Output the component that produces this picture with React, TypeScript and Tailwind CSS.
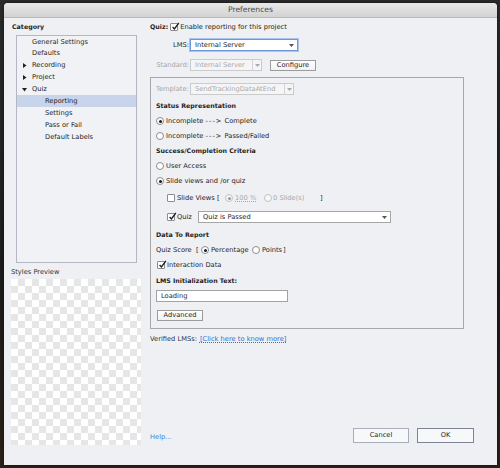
import React from 'react'

function Arrow({ color = '#555' }: { color?: string }) {
    return (
        <svg width="5" height="3" viewBox="0 0 5 3" className="shrink-0">
            <path d="M0 0 L5 0 L2.5 3 Z" fill={color} />
        </svg>
    )
}

function Tri({ open }: { open?: boolean }) {
    return open ? (
        <svg width="5" height="5" viewBox="0 0 5 5">
            <path d="M0 1 L5 1 L2.5 4.5 Z" fill="#222" />
        </svg>
    ) : (
        <svg width="5" height="5" viewBox="0 0 5 5">
            <path d="M1 0 L4.5 2.5 L1 5 Z" fill="#222" />
        </svg>
    )
}

function Check({ checked }: { checked?: boolean }) {
    return (
        <span className="relative block w-[8px] h-[8px] shrink-0 border border-[#8c8c8c] bg-white rounded-[1px]">
            {checked && (
                <svg width="9" height="9" viewBox="0 0 9 9" className="absolute left-[-0.5px] top-[-2px]">
                    <path d="M1.6 5 L3.4 7 L7.8 1" stroke="#1e1e1e" strokeWidth="1.3" fill="none" />
                </svg>
            )}
        </span>
    )
}

function Radio({ on, disabled }: { on?: boolean; disabled?: boolean }) {
    return (
        <span
            className={
                disabled
                    ? 'flex items-center justify-center w-[8px] h-[8px] shrink-0 rounded-full border border-[#c2c2c2] bg-[#f7f7f7]'
                    : 'flex items-center justify-center w-[8px] h-[8px] shrink-0 rounded-full border border-[#8c8c8c] bg-white'
            }
        >
            {on && <span className={disabled ? 'w-[3px] h-[3px] rounded-full bg-[#9a9a9a]' : 'w-[3px] h-[3px] rounded-full bg-[#1e1e1e]'} />}
        </span>
    )
}

const tree = [
    { label: 'General Settings', depth: 0 },
    { label: 'Defaults', depth: 0 },
    { label: 'Recording', depth: 0, tri: 'closed' },
    { label: 'Project', depth: 0, tri: 'closed' },
    { label: 'Quiz', depth: 0, tri: 'open' },
    { label: 'Reporting', depth: 1, selected: true },
    { label: 'Settings', depth: 1 },
    { label: 'Pass or Fail', depth: 1 },
    { label: 'Default Labels', depth: 1 },
]

export default function App() {
    return (
        <div className="w-[500px] h-[468px] overflow-hidden bg-[linear-gradient(180deg,#2a2a2a,#1b1b1b_60%,#2b2116)] pt-[3px] pl-[4px] pr-[3px] font-['DejaVu_Sans',sans-serif] text-[6.7px] leading-none text-[#1f1f1f]">
            <div className="w-[493px] h-[462px] flex flex-col rounded-t-[4px] overflow-hidden bg-[#eff0f4] shadow-[0_0_3px_rgba(0,0,0,0.6)]">
                {/* title bar */}
                <div className="h-[15px] shrink-0 flex items-center justify-center bg-[linear-gradient(180deg,#e9e9e9,#d2d2d2)] border-b border-[#b9b9b9] text-[7.7px] text-[#4a4a4a]">
                    Preferences
                </div>

                <div className="flex-1 flex pl-[7px] pr-[23px]">
                    {/* left column */}
                    <div className="w-[130px] shrink-0 flex flex-col">
                        <div className="h-[10px] mt-[4px] ml-px flex items-center font-bold text-[6.3px]">Category</div>
                        <div className="mt-[3px] ml-[5px] w-[121px] h-[228px] border border-[#b3b7c3] bg-[#f1f2f5]">
                            {tree.map((t) => (
                                <div
                                    key={t.label}
                                    className={
                                        t.selected
                                            ? 'h-[11.9px] flex items-center bg-[#c7d4ea]'
                                            : 'h-[11.9px] flex items-center'
                                    }
                                >
                                    <span className="w-[15px] shrink-0 flex justify-end pr-[5px]">
                                        {t.tri === 'closed' && <Tri />}
                                        {t.tri === 'open' && <Tri open />}
                                    </span>
                                    <span className={t.depth === 1 ? 'pl-[13px]' : ''}>{t.label}</span>
                                </div>
                            ))}
                        </div>
                        <div className="h-[10px] mt-[4px] flex items-center text-[#333]">Styles Preview</div>
                        <div className="mt-[2px] w-[130px] h-[166px] bg-[conic-gradient(#e6e6e6_25%,#ffffff_0_50%,#e6e6e6_0_75%,#ffffff_0)] bg-[length:14px_14px]" />
                    </div>

                    {/* right column */}
                    <div className="flex-1 ml-[9px] flex flex-col">
                        <div className="h-[12px] mt-[3px] flex items-center">
                            <span className="font-bold text-[6.3px]">Quiz:</span>
                            <span className="ml-[2px]"><Check checked /></span>
                            <span className="ml-[2px]">Enable reporting for this project</span>
                        </div>

                        <div className="h-[12px] mt-[6px] flex items-center">
                            <span className="w-[39px] text-right">LMS:</span>
                            <div className="ml-[1px] w-[108px] h-[12px] flex items-center pl-[4px] pr-[3px] bg-white border border-[#6f98d8] shadow-[0_0_0_1px_#a9c3ea]">
                                <span>Internal Server</span>
                                <span className="ml-auto"><Arrow /></span>
                            </div>
                        </div>

                        <div className="h-[12px] mt-[8px] flex items-center">
                            <span className="w-[39px] text-right text-[#a6a6a6]">Standard:</span>
                            <div className="ml-[1px] w-[72px] h-[12px] flex items-center pl-[4px] bg-[#f5f5f6] border border-[#cbcbcb] text-[#a9a9a9]">
                                <span>Internal Server</span>
                                <span className="ml-auto h-full border-l border-[#d4d4d4] w-[9px] flex items-center justify-center">
                                    <Arrow color="#aaa" />
                                </span>
                            </div>
                            <div className="ml-[8px] w-[46px] h-[11px] flex items-center justify-center border border-[#9c9c9c] bg-[linear-gradient(180deg,#ffffff,#f1f1f1)]">
                                Configure
                            </div>
                        </div>

                        {/* group box */}
                        <div className="mt-[6px] w-[314px] h-[252px] border border-[#a8a8ab] px-[5px] flex flex-col">
                            <div className="h-[12px] mt-[5px] flex items-center">
                                <span className="w-[33px] text-[#a6a6a6]">Template:</span>
                                <div className="ml-px w-[104px] h-[12px] flex items-center pl-[4px] bg-[#f5f5f6] border border-[#cbcbcb] text-[#a9a9a9]">
                                    <span>SendTrackingDataAtEnd</span>
                                    <span className="ml-auto h-full border-l border-[#d4d4d4] w-[9px] flex items-center justify-center">
                                        <Arrow color="#aaa" />
                                    </span>
                                </div>
                            </div>

                            <div className="h-[15px] mt-[3.5px] flex items-center font-bold text-[6.3px]">Status Representation</div>
                            <div className="h-[15px] flex items-center gap-[2px]">
                                <Radio on />
                                <span>Incomplete <span className="tracking-[1px]">---&gt;</span> Complete</span>
                            </div>
                            <div className="h-[15px] flex items-center gap-[2px]">
                                <Radio />
                                <span>Incomplete <span className="tracking-[1px]">---&gt;</span> Passed/Failed</span>
                            </div>
                            <div className="h-[15px] flex items-center font-bold text-[6.3px]">Success/Completion Criteria</div>
                            <div className="h-[15px] flex items-center gap-[2px]">
                                <Radio />
                                <span>User Access</span>
                            </div>
                            <div className="h-[15px] flex items-center gap-[2px]">
                                <Radio on />
                                <span>Slide views and /or quiz</span>
                            </div>

                            <div className="h-[15px] mt-[2px] pl-[11px] flex items-center">
                                <Check />
                                <span className="ml-[2px] w-[48px]">Slide Views [</span>
                                <Radio on disabled />
                                <span className="ml-[2px] w-[29px] text-[#a8a8a8] underline decoration-dotted">100 %</span>
                                <Radio disabled />
                                <span className="ml-[1px] w-[47px] text-[#a8a8a8]">0 Slide(s)</span>
                                <span>]</span>
                            </div>

                            <div className="h-[15px] mt-[4px] pl-[11px] flex items-center">
                                <Check checked />
                                <span className="ml-[2px] w-[21px]">Quiz</span>
                                <div className="w-[193px] h-[12px] flex items-center pl-[4px] pr-[3px] bg-white border border-[#a6a6a6]">
                                    <span>Quiz is Passed</span>
                                    <span className="ml-auto"><Arrow /></span>
                                </div>
                            </div>

                            <div className="h-[15px] mt-[3px] flex items-center font-bold text-[6.3px]">Data To Report</div>
                            <div className="h-[15px] flex items-center">
                                <span className="w-[40px]">Quiz Score</span>
                                <span className="w-[5px]">[</span>
                                <Radio on />
                                <span className="ml-[2px] w-[41px]">Percentage</span>
                                <Radio />
                                <span className="ml-[2px]">Points</span>
                                <span className="ml-px">]</span>
                            </div>
                            <div className="h-[15px] pl-px flex items-center gap-[2px]">
                                <Check checked />
                                <span>Interaction Data</span>
                            </div>
                            <div className="h-[15px] mt-[1px] flex items-center font-bold text-[6.3px]">LMS Initialization Text:</div>
                            <div className="mt-[1.5px] w-[132px] h-[12px] flex items-center pl-[4px] bg-white border border-[#a2a2a2]">
                                Loading
                            </div>
                            <div className="mt-[8px] ml-px w-[46px] h-[11px] flex items-center justify-center border border-[#9c9c9c] bg-[linear-gradient(180deg,#ffffff,#f1f1f1)]">
                                Advanced
                            </div>
                        </div>

                        <div className="h-[10px] mt-[5px] flex items-center">
                            <span className="text-[#333]">Verified LMSs:</span>
                            <span className="ml-[3px] text-[#2f6fd2] underline decoration-dotted underline-offset-[1px]">[Click here to know more]</span>
                        </div>

                        <div className="mt-auto mb-[22px] flex items-center">
                            <span className="mt-[3px] text-[#3d84cf]">Help...</span>
                            <div className="ml-auto flex gap-[8px]">
                                <div className="w-[56px] h-[15px] flex items-center justify-center border border-[#a9adbb] bg-[#f7f8fa]">
                                    Cancel
                                </div>
                                <div className="w-[57px] h-[15px] flex items-center justify-center border border-[#7e8396] bg-[#f7f8fa]">
                                    OK
                                </div>
                            </div>
                        </div>
                    </div>
                </div>
            </div>
        </div>
    )
}
